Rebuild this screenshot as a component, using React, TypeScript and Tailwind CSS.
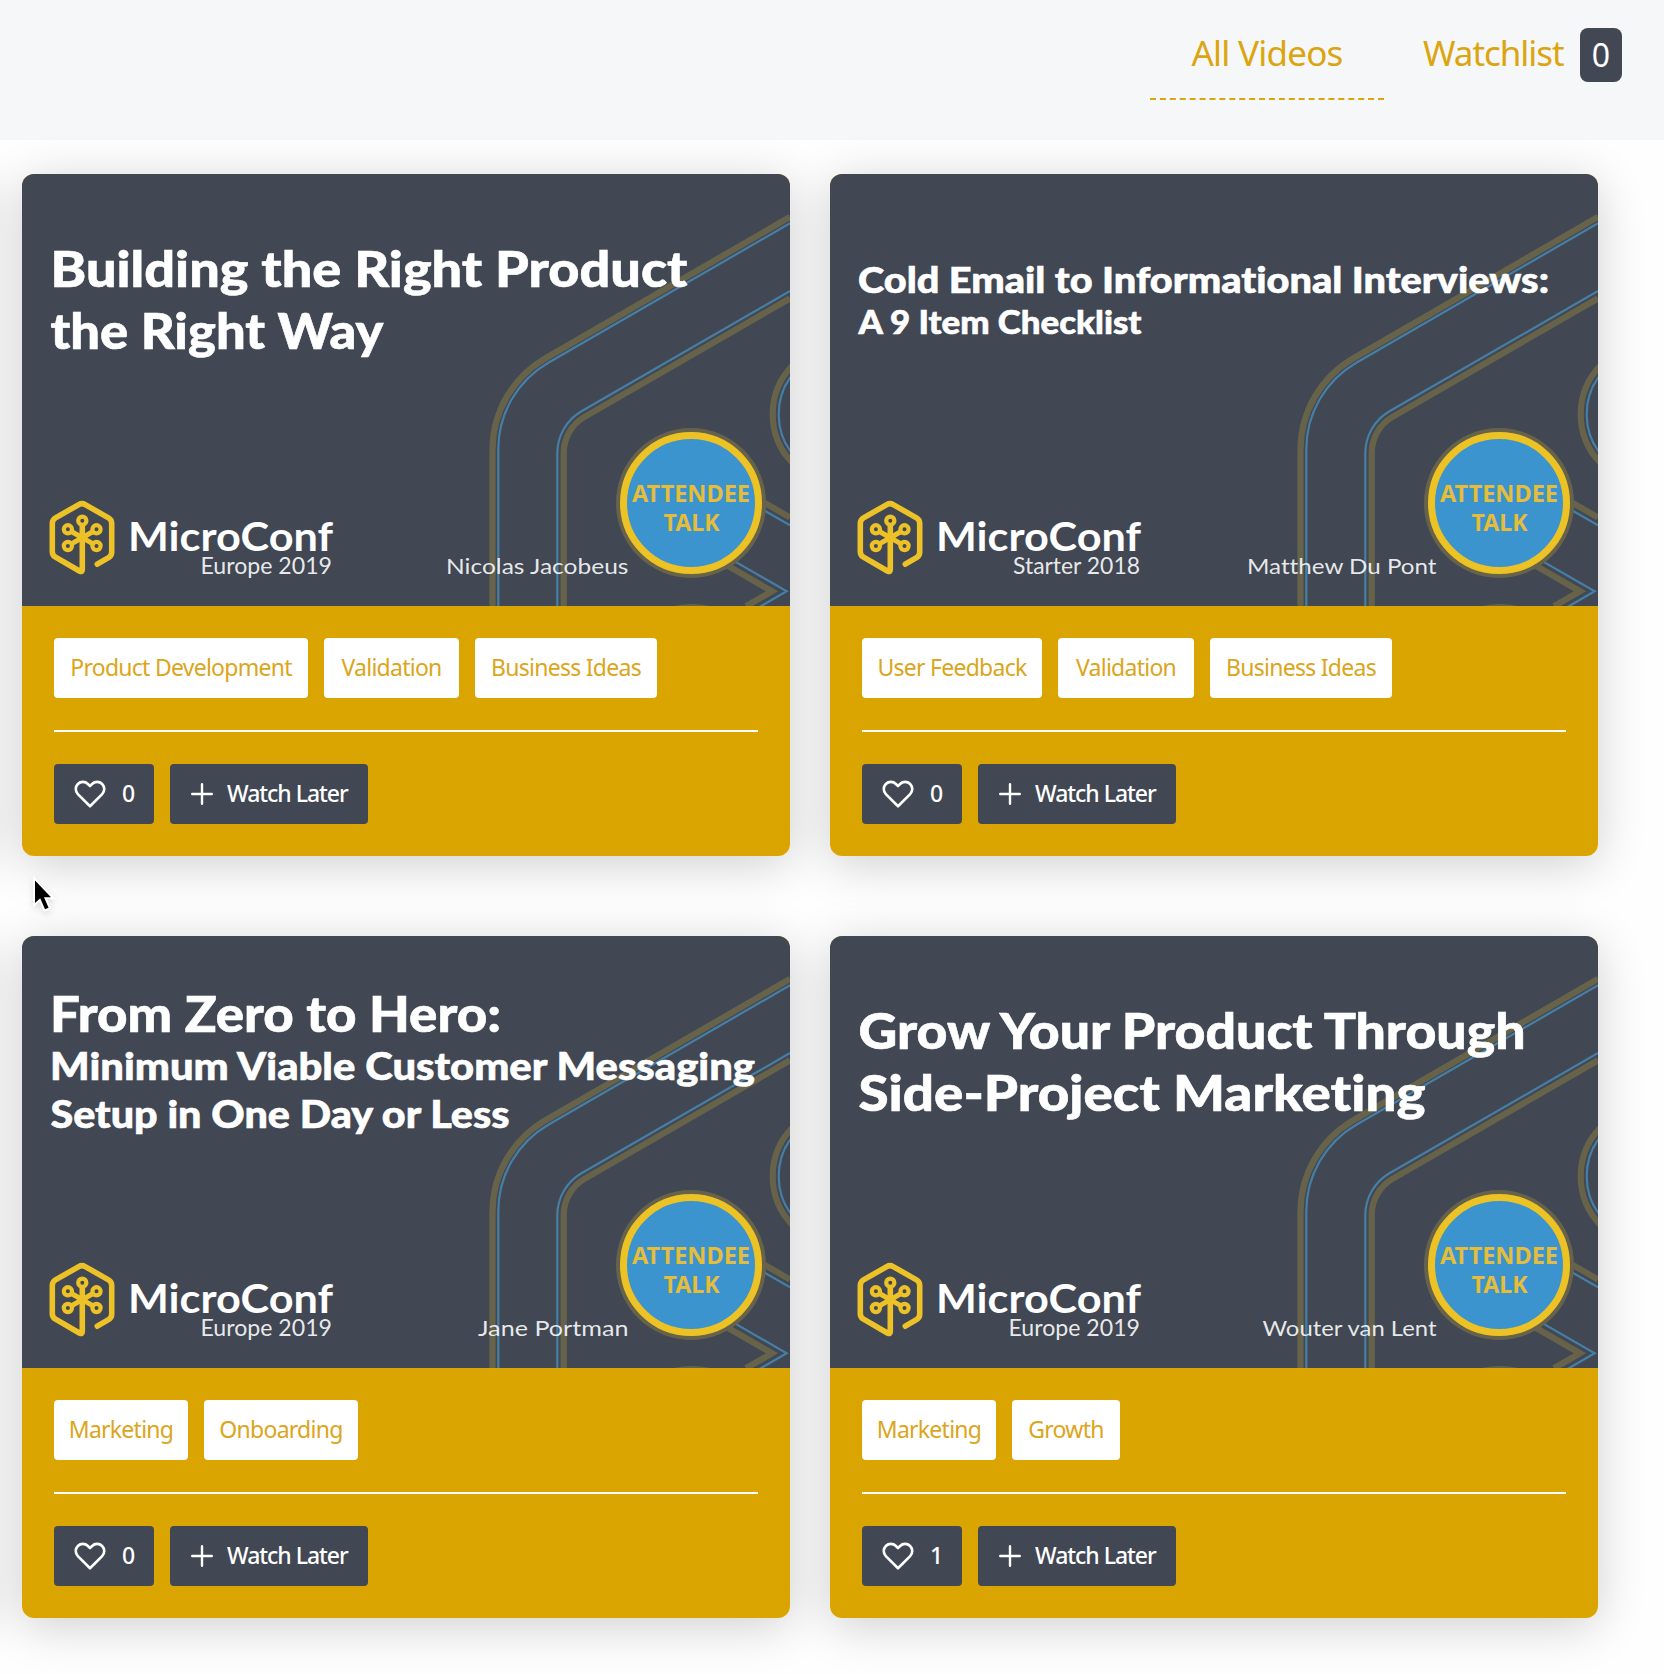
import React from 'react';

interface ThumbLine {
  text: string;
  x: number;
  y: number;
  /** Rendered width of the line, in thumbnail units. */
  length: number;
  size: number;
}

interface Tag {
  label: string;
  width: string;
}

interface Video {
  id: string;
  title: ThumbLine[];
  event: string;
  eventX: number;
  speaker: string;
  speakerX: number;
  tags: Tag[];
  likes: number;
}

const TAGS = {
  product: { label: 'Product Development', width: 'w-[254px]' },
  validation: { label: 'Validation', width: 'w-[135px]' },
  ideas: { label: 'Business Ideas', width: 'w-[182px]' },
  feedback: { label: 'User Feedback', width: 'w-[180px]' },
  marketing: { label: 'Marketing', width: 'w-[134px]' },
  onboarding: { label: 'Onboarding', width: 'w-[154px]' },
  growth: { label: 'Growth', width: 'w-[108px]' },
};

const VIDEOS: Video[] = [
  {
    id: 'right-product',
    title: [
      { text: 'Building the Right Product', x: 28.5, y: 112.7, length: 637, size: 50 },
      { text: 'the Right Way', x: 28.5, y: 175.3, length: 333, size: 50 },
    ],
    event: 'Europe 2019',
    eventX: 178.5,
    speaker: 'Nicolas Jacobeus',
    speakerX: 424,
    tags: [TAGS.product, TAGS.validation, TAGS.ideas],
    likes: 0,
  },
  {
    id: 'cold-email',
    title: [
      { text: 'Cold Email to Informational Interviews:', x: 28, y: 118.8, length: 691, size: 36 },
      { text: 'A 9 Item Checklist', x: 28.5, y: 159.7, length: 283, size: 32.5 },
    ],
    event: 'Starter 2018',
    eventX: 183,
    speaker: 'Matthew Du Pont',
    speakerX: 417,
    tags: [TAGS.feedback, { ...TAGS.validation, width: 'w-[136px]' }, TAGS.ideas],
    likes: 0,
  },
  {
    id: 'zero-to-hero',
    title: [
      { text: 'From Zero to Hero:', x: 28, y: 96.3, length: 451, size: 50 },
      { text: 'Minimum Viable Customer Messaging', x: 28, y: 144, length: 705, size: 37.5 },
      { text: 'Setup in One Day or Less', x: 28.5, y: 192, length: 459, size: 37.5 },
    ],
    event: 'Europe 2019',
    eventX: 178.5,
    speaker: 'Jane Portman',
    speakerX: 456,
    tags: [TAGS.marketing, TAGS.onboarding],
    likes: 0,
  },
  {
    id: 'side-project',
    title: [
      { text: 'Grow Your Product Through', x: 28.5, y: 113, length: 667, size: 50 },
      { text: 'Side-Project Marketing', x: 28.5, y: 175, length: 567, size: 50 },
    ],
    event: 'Europe 2019',
    eventX: 178.5,
    speaker: 'Wouter van Lent',
    speakerX: 432.5,
    tags: [TAGS.marketing, TAGS.growth],
    likes: 1,
  },
];

const HeartIcon = () => (
  <svg className="-mt-0.5 size-[38px] shrink-0" viewBox="0 0 24 24" fill="none" stroke="currentColor" strokeWidth="1.65" strokeLinecap="round" strokeLinejoin="round">
    <path d="M4.318 6.318a4.5 4.5 0 0 0 0 6.364L12 20.364l7.682-7.682a4.5 4.5 0 0 0-6.364-6.364L12 7.636l-1.318-1.318a4.5 4.5 0 0 0-6.364 0z" />
  </svg>
);

const PlusIcon = () => (
  <svg className="size-[22px] shrink-0" viewBox="0 0 22 22" fill="none" stroke="currentColor" strokeWidth="2.4" strokeLinecap="round">
    <path d="M11 1.2v19.6M1.200 11h19.600" />
  </svg>
);

const PointerIcon = () => (
  <svg className="absolute top-[874px] left-[30px] h-[42px] w-[28px] drop-shadow-md" viewBox="0 0 28 42">
    <path d="M5 6.5v22.5l5.2-4.8 4.8 11 3.6-1.5-4.6-10.5h7z" fill="#000" stroke="#fff" strokeWidth="4" paintOrder="stroke" />
  </svg>
);

/** Hexagon mark with the circuit "tree" inside. */
const LogoMark = () => (
  <g fill="none" stroke="#ecc228" strokeWidth="5.6" strokeLinecap="round" strokeLinejoin="round">
    <path d="M75.3 390.2l11.2-6.6q3.2-2 3.2-5.4V349.5q0-3.8-3.2-5.6L63.2 330.6q-3.2-1.9-6.4 0L33.5 343.9q-3.2 1.9-3.2 5.6v28.2q0 3.6 3.2 5.5L57.8 397.2q2.500 1.200 2.500-1.600V351" />
    <path d="M48.500 357l23.500 13.400M72 357l-23.500 13.400" strokeWidth="5" />
    <g strokeWidth="4.200">
      <circle cx="60.300" cy="346.700" r="4.100" fill="#414753" />
      <circle cx="45.900" cy="355.300" r="4.100" fill="#414753" />
      <circle cx="74.500" cy="355.300" r="4.100" fill="#414753" />
      <circle cx="45.900" cy="372" r="4.100" fill="#414753" />
      <circle cx="74.500" cy="372" r="4.100" fill="#414753" />
    </g>
  </g>
);

const Thumbnail: React.FC<{ video: Video }> = ({ video }) => (
  <svg className="block h-[432px] w-full bg-[#414753] [font-variant-ligatures:none]" viewBox="0 0 768 432" fontFamily="Lato, sans-serif">
    <g fill="none" stroke="#67634b" strokeWidth="6.2">
      <path d="M470.500 432V275.800A106 106 0 0 1 523.500 184.200L768 43" />
      <path d="M541.700 432V278.900A41.600 41.600 0 0 1 562.500 242.900L768 124.300" />
      <circle cx="820.500" cy="240.300" r="69.800" />
      <path d="M738 326.200L768 343.500" />
      <path d="M704 390.700L750 417.300L724 432.300" />
      <circle cx="670" cy="502" r="69" />
    </g>
    <g fill="none" stroke="#467fa5" strokeWidth="2.200">
      <path d="M476.300 432V275.300A100 100 0 0 1 526.300 188.700L768 49.300" />
      <path d="M535.300 432V279.300A48.500 48.500 0 0 1 559.500 237.300L768 117" />
      <circle cx="820.500" cy="240.300" r="63.800" />
      <path d="M738 334L768 351.300" />
      <path d="M708 384.600L764.700 417.300L738 432.700" />
    </g>

    <circle cx="669" cy="329" r="75" fill="#67634b" />
    <circle cx="669" cy="329" r="67.500" fill="#3b94cd" stroke="#edc225" strokeWidth="7" />
    <g fill="#e5bd3a" fontFamily="'Noto Sans', sans-serif" fontWeight="700" fontSize="23">
      <text x="610" y="327.800" textLength="118" lengthAdjust="spacingAndGlyphs">ATTENDEE</text>
      <text x="641.500" y="356.700" textLength="56" lengthAdjust="spacingAndGlyphs">TALK</text>
    </g>

    <LogoMark />

    <g fill="#fff">
      <text x="106" y="377.300" fontSize="41" fontWeight="700" textLength="205" lengthAdjust="spacingAndGlyphs">MicroConf</text>
      <text x={video.eventX} y="399.700" fontSize="23" fillOpacity="0.9" textLength={310 - video.eventX} lengthAdjust="spacingAndGlyphs">{video.event}</text>
      <text x={video.speakerX} y="400" fontSize="22" fillOpacity="0.88" textLength={606.5 - video.speakerX} lengthAdjust="spacingAndGlyphs">{video.speaker}</text>
      {video.title.map(line => (
        <text key={line.text} x={line.x} y={line.y} fontSize={line.size} fontWeight="900" stroke="#fff" strokeWidth="0.6" textLength={line.length} lengthAdjust="spacingAndGlyphs">
          {line.text}
        </text>
      ))}
    </g>
  </svg>
);

const VideoCard: React.FC<{ video: Video }> = ({ video }) => (
  <article className="w-[768px] rounded-xl shadow-[0_8px_48px_rgba(0,0,0,0.19)]">
    <div className="overflow-hidden rounded-xl bg-[#dba501]">
      <Thumbnail video={video} />
      <div className="p-8 text-[23px] tracking-[-0.032em]">
        <div className="flex gap-4">
          {video.tags.map(tag => (
            <span key={tag.label} className={`${tag.width} flex h-[60px] items-center justify-center rounded bg-white pb-0.5 whitespace-nowrap text-[#dba51c]`}>
              {tag.label}
            </span>
          ))}
        </div>
        <hr className="my-8 border-t-2 border-white" />
        <div className="flex gap-4 text-white">
          <button className="flex h-[60px] w-[100px] items-center gap-[13px] rounded bg-[#414753] pl-[17px]">
            <HeartIcon />
            <span className="pb-0.5 font-medium">{video.likes}</span>
          </button>
          <button className="flex h-[60px] w-[198px] items-center gap-[14px] rounded bg-[#414753] pl-[21px] whitespace-nowrap">
            <PlusIcon />
            <span className="pb-0.5 font-medium tracking-[-0.045em]">Watch Later</span>
          </button>
        </div>
      </div>
    </div>
  </article>
);

/** Card of the column that is scrolled out of view; only its shadow shows. */
const OffscreenCard = () => <div className="w-[768px] rounded-xl bg-[#dba501] shadow-[0_8px_48px_rgba(0,0,0,0.19)]" />;

export default function App() {
  return (
    <div className="relative h-[1674px] w-[1664px] overflow-hidden bg-[#fefefe] font-['Noto_Sans',sans-serif]">
      <header className="flex h-[140px] justify-end bg-[#f6f7f8] pr-[42px] text-[35px] tracking-[-0.022em] text-[#dba510]">
        <a className="flex h-[100px] w-[234px] items-center justify-center border-b-2 border-dashed border-[#dba510] pt-[9px] whitespace-nowrap">
          All Videos
        </a>
        <a className="ml-[39px] flex h-[110px] items-center whitespace-nowrap">
          <span className="w-[157px] pb-[3px] tracking-[-0.03em]">Watchlist</span>
          <span className="flex h-[54px] w-[42px] items-center justify-center rounded-lg bg-[#414753] text-[32px] tracking-normal text-white">0</span>
        </a>
      </header>

      <main className="-ml-[786px] grid w-max grid-cols-[768px_768px_768px] gap-x-10 gap-y-20 pt-[34px]">
        <OffscreenCard />
        {VIDEOS.slice(0, 2).map(video => <VideoCard key={video.id} video={video} />)}
        <OffscreenCard />
        {VIDEOS.slice(2).map(video => <VideoCard key={video.id} video={video} />)}
      </main>

      <PointerIcon />
    </div>
  );
}
